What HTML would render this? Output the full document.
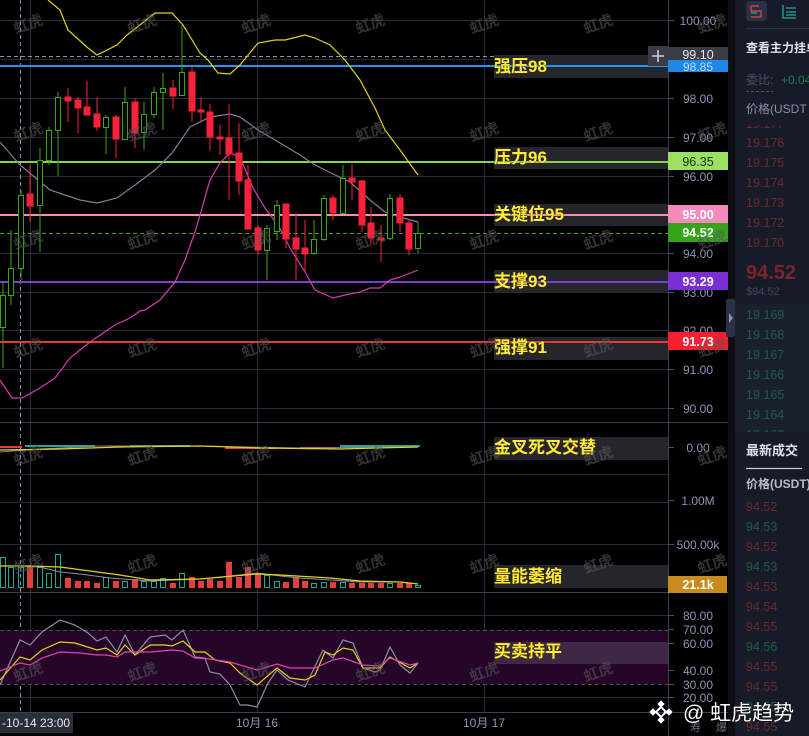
<!DOCTYPE html>
<html><head><meta charset="utf-8"><style>
html,body{margin:0;padding:0;background:#000;}
body{width:809px;height:736px;overflow:hidden;position:relative;font-family:"Liberation Sans","Noto Sans CJK SC",sans-serif;}
svg{position:absolute;left:0;top:0}
text{font-family:"Liberation Sans","Noto Sans CJK SC",sans-serif}
</style></head><body>
<svg width="809" height="736" viewBox="0 0 809 736" xmlns="http://www.w3.org/2000/svg">
<rect width="809" height="736" fill="#000"/>
<g stroke="#262a3a" stroke-width="1">
<line x1="0" y1="20.5" x2="668" y2="20.5"/><line x1="0" y1="59.5" x2="668" y2="59.5"/><line x1="0" y1="98.5" x2="668" y2="98.5"/><line x1="0" y1="137.5" x2="668" y2="137.5"/><line x1="0" y1="176.5" x2="668" y2="176.5"/><line x1="0" y1="253.5" x2="668" y2="253.5"/><line x1="0" y1="292.5" x2="668" y2="292.5"/><line x1="0" y1="330.5" x2="668" y2="330.5"/><line x1="0" y1="369.5" x2="668" y2="369.5"/><line x1="0" y1="408.5" x2="668" y2="408.5"/>
<line x1="0" y1="474.5" x2="668" y2="474.5"/><line x1="0" y1="502.5" x2="668" y2="502.5"/><line x1="0" y1="544.5" x2="668" y2="544.5"/><line x1="0" y1="615.5" x2="668" y2="615.5"/><line x1="0" y1="643.5" x2="668" y2="643.5"/><line x1="0" y1="670.5" x2="668" y2="670.5"/><line x1="0" y1="697.5" x2="668" y2="697.5"/>
<line x1="30.5" y1="0" x2="30.5" y2="712"/><line x1="257.5" y1="0" x2="257.5" y2="712"/><line x1="484.5" y1="0" x2="484.5" y2="712"/>
</g>
<g stroke="#3a3f55" stroke-width="1"><line x1="0" y1="422.5" x2="728" y2="422.5"/><line x1="0" y1="592.5" x2="728" y2="592.5"/><line x1="0" y1="712.5" x2="728" y2="712.5"/><line x1="668.5" y1="0" x2="668.5" y2="736"/></g>
<line x1="20.5" y1="0" x2="20.5" y2="712" stroke="#8a94b0" stroke-dasharray="4,3"/>
<rect x="0" y="630" width="668" height="54" fill="#250628"/>
<line x1="0" y1="630.5" x2="668" y2="630.5" stroke="#4a4f66" stroke-dasharray="4,3"/>
<line x1="0" y1="684.5" x2="668" y2="684.5" stroke="#4a4f66" stroke-dasharray="4,3"/>
<line x1="0" y1="56.5" x2="668" y2="56.5" stroke="#8a94b0" stroke-dasharray="4,3"/>
<line x1="0" y1="66" x2="728" y2="66" stroke="#2196f3" stroke-width="2"/>
<line x1="0" y1="162" x2="668" y2="162" stroke="#8bd24a" stroke-width="2"/>
<line x1="0" y1="215" x2="668" y2="215" stroke="#f48fb1" stroke-width="2"/>
<line x1="0" y1="233.5" x2="668" y2="233.5" stroke="#3ca51c" stroke-dasharray="4,3"/>
<line x1="0" y1="282" x2="668" y2="282" stroke="#7b3fcf" stroke-width="2"/>
<line x1="0" y1="342" x2="668" y2="342" stroke="#e53935" stroke-width="2"/>
<polyline fill="none" stroke="#e6d21a" stroke-width="1.2" points="48,0 60,10 68,30 88,48 97,55 117,45 127,35 155,13 172,13 183,25 200,53 208,60 218,73 230,74 240,65 258,43 275,40 285,40 305,35 315,38 330,45 345,60 360,80 375,108 385,130 400,150 418,175"/>
<polyline fill="none" stroke="#7c8196" stroke-width="1.2" points="0,142 20,165 50,190 80,200 97,203 117,198 135,185 155,170 172,153 190,127 210,117 230,114 240,117 258,130 275,140 300,155 315,165 335,175 350,182 370,200 385,212 400,217 418,222"/>
<polyline fill="none" stroke="#d63cb0" stroke-width="1.2" points="0,380 12,398 22,398 40,388 55,378 70,358 90,342 115,325 130,318 140,311 145,310 160,300 175,282 185,260 195,232 200,215 210,180 220,163 230,153 240,157 253,188 265,208 278,225 290,248 305,272 315,290 333,298 345,295 360,292 370,288 380,288 390,280 400,277 418,270"/>
<g>
<g stroke="#3ca51c" fill="#000">
<line x1="3" y1="282" x2="3" y2="368"/><rect x="0.5" y="295.5" width="5" height="32"/>
<line x1="11" y1="230" x2="11" y2="305"/><rect x="8.5" y="268.5" width="5" height="27"/>
<line x1="21" y1="190" x2="21" y2="280"/><rect x="18.5" y="195.5" width="5" height="73"/>
<line x1="40" y1="148" x2="40" y2="252"/><rect x="37.5" y="160.5" width="5" height="45"/>
<line x1="49" y1="127" x2="49" y2="165"/><rect x="46.5" y="130.5" width="5" height="30"/>
<line x1="58" y1="92" x2="58" y2="176"/><rect x="55.5" y="97.5" width="5" height="33"/>
<line x1="106" y1="115" x2="106" y2="154"/><rect x="103.5" y="117.5" width="5" height="10"/>
<line x1="125" y1="87" x2="125" y2="140"/><rect x="122.5" y="102.5" width="5" height="37"/>
<line x1="144" y1="102" x2="144" y2="150"/><rect x="141.5" y="114.5" width="5" height="18"/>
<line x1="154" y1="87" x2="154" y2="118"/><rect x="151.5" y="92.5" width="5" height="22"/>
<line x1="163" y1="73" x2="163" y2="130"/><rect x="160.5" y="88.5" width="5" height="4"/>
<line x1="182" y1="25" x2="182" y2="95"/><rect x="179.5" y="72.5" width="5" height="23"/>
<line x1="267" y1="225" x2="267" y2="280"/><rect x="264.5" y="228.5" width="5" height="22"/>
<line x1="277" y1="200" x2="277" y2="240"/><rect x="274.5" y="205.5" width="5" height="26"/>
<line x1="314" y1="220" x2="314" y2="255"/><rect x="311.5" y="239.5" width="5" height="14"/>
<line x1="324" y1="195" x2="324" y2="241"/><rect x="321.5" y="198.5" width="5" height="41"/>
<line x1="343" y1="165" x2="343" y2="214"/><rect x="340.5" y="178.5" width="5" height="35"/>
<line x1="390" y1="194" x2="390" y2="240"/><rect x="387.5" y="198.5" width="5" height="40"/>
<line x1="418" y1="222" x2="418" y2="253"/><rect x="415.5" y="233.5" width="5" height="15"/>
</g>
<g stroke="#f5223a" fill="#f5223a">
<line x1="30" y1="165" x2="30" y2="222"/><rect x="27" y="194" width="6" height="12"/>
<line x1="68" y1="88" x2="68" y2="122"/><rect x="65" y="97" width="6" height="4"/>
<line x1="78" y1="97" x2="78" y2="133"/><rect x="75" y="100" width="6" height="8"/>
<line x1="87" y1="81" x2="87" y2="115"/><rect x="84" y="107" width="6" height="8"/>
<line x1="97" y1="97" x2="97" y2="131"/><rect x="94" y="114" width="6" height="13"/>
<line x1="116" y1="115" x2="116" y2="158"/><rect x="113" y="117" width="6" height="22"/>
<line x1="135" y1="98" x2="135" y2="148"/><rect x="132" y="102" width="6" height="31"/>
<line x1="173" y1="80" x2="173" y2="109"/><rect x="170" y="88" width="6" height="8"/>
<line x1="192" y1="65" x2="192" y2="122"/><rect x="189" y="72" width="6" height="39"/>
<line x1="201" y1="97" x2="201" y2="121"/><rect x="198" y="110" width="6" height="2"/>
<line x1="210" y1="104" x2="210" y2="151"/><rect x="207" y="112" width="6" height="25"/>
<line x1="220" y1="125" x2="220" y2="155"/><rect x="217" y="137" width="6" height="2"/>
<line x1="229" y1="104" x2="229" y2="200"/><rect x="226" y="138" width="6" height="16"/>
<line x1="239" y1="123" x2="239" y2="195"/><rect x="236" y="153" width="6" height="28"/>
<line x1="248" y1="165" x2="248" y2="229"/><rect x="245" y="180" width="6" height="49"/>
<line x1="258" y1="225" x2="258" y2="255"/><rect x="255" y="228" width="6" height="22"/>
<line x1="286" y1="204" x2="286" y2="248"/><rect x="283" y="204" width="6" height="35"/>
<line x1="296" y1="213" x2="296" y2="280"/><rect x="293" y="238" width="6" height="11"/>
<line x1="305" y1="220" x2="305" y2="272"/><rect x="302" y="248" width="6" height="6"/>
<line x1="333" y1="195" x2="333" y2="220"/><rect x="330" y="198" width="6" height="15"/>
<line x1="352" y1="164" x2="352" y2="200"/><rect x="349" y="178" width="6" height="4"/>
<line x1="362" y1="180" x2="362" y2="232"/><rect x="359" y="181" width="6" height="44"/>
<line x1="371" y1="207" x2="371" y2="244"/><rect x="368" y="223" width="6" height="15"/>
<line x1="381" y1="225" x2="381" y2="262"/><rect x="378" y="238" width="6" height="2"/>
<line x1="400" y1="194" x2="400" y2="232"/><rect x="397" y="198" width="6" height="25"/>
<line x1="409" y1="219" x2="409" y2="255"/><rect x="406" y="223" width="6" height="26"/>
</g>
</g>
<g fill="#26a69a"><rect x="25" y="445" width="70" height="2"/><rect x="130" y="445" width="60" height="2"/><rect x="340" y="445" width="80" height="2"/></g>
<g fill="#e04040"><rect x="0" y="446" width="22" height="2"/><rect x="225" y="447" width="50" height="2"/><rect x="300" y="447" width="35" height="2"/></g>
<polyline fill="none" stroke="#7c8196" stroke-width="1" points="0,452 40,449 100,446 200,446 300,448 418,447"/>
<polyline fill="none" stroke="#e6d21a" stroke-width="1.2" points="0,450 60,449 120,447 200,446 260,448 340,449 418,447"/>
<g fill="#e04040">
<rect x="27" y="567" width="6" height="21"/><rect x="65" y="578" width="6" height="10"/><rect x="75" y="581" width="6" height="7"/><rect x="84" y="581" width="6" height="7"/><rect x="94" y="583" width="6" height="5"/><rect x="113" y="581" width="6" height="7"/><rect x="132" y="579" width="6" height="9"/><rect x="170" y="583" width="6" height="5"/><rect x="189" y="577" width="6" height="11"/><rect x="198" y="581" width="6" height="7"/><rect x="207" y="579" width="6" height="9"/><rect x="217" y="581" width="6" height="7"/><rect x="226" y="562" width="6" height="26"/><rect x="236" y="577" width="6" height="11"/><rect x="245" y="567" width="6" height="21"/><rect x="255" y="574" width="6" height="14"/><rect x="283" y="582" width="6" height="6"/><rect x="293" y="577" width="6" height="11"/><rect x="302" y="581" width="6" height="7"/><rect x="330" y="582" width="6" height="6"/><rect x="349" y="583" width="6" height="5"/><rect x="359" y="583" width="6" height="5"/><rect x="368" y="583" width="6" height="5"/><rect x="378" y="583" width="6" height="5"/><rect x="397" y="583" width="6" height="5"/><rect x="406" y="583" width="6" height="5"/>
</g>
<g fill="none" stroke="#26a69a">
<rect x="0.5" y="557.5" width="5" height="30"/><rect x="8.5" y="567.5" width="5" height="20"/><rect x="18.5" y="567.5" width="5" height="20"/><rect x="37.5" y="567.5" width="5" height="20"/><rect x="46.5" y="573.5" width="5" height="14"/><rect x="55.5" y="554.5" width="5" height="33"/><rect x="103.5" y="577.5" width="5" height="10"/><rect x="122.5" y="581.5" width="5" height="6"/><rect x="141.5" y="581.5" width="5" height="6"/><rect x="151.5" y="581.5" width="5" height="6"/><rect x="160.5" y="578.5" width="5" height="9"/><rect x="179.5" y="573.5" width="5" height="14"/><rect x="264.5" y="575.5" width="5" height="12"/><rect x="274.5" y="581.5" width="5" height="6"/><rect x="311.5" y="583.5" width="5" height="4"/><rect x="321.5" y="582.5" width="5" height="5"/><rect x="340.5" y="582.5" width="5" height="5"/><rect x="387.5" y="583.5" width="5" height="4"/><rect x="415.5" y="585.5" width="5" height="2"/>
</g>
<polyline fill="none" stroke="#8a8fa5" stroke-width="1" points="0,566 20,566 40,567 60,572 80,574 110,578 150,581 200,579 230,576 257,573 280,576 300,578 330,580 360,582 400,582 418,584"/>
<polyline fill="none" stroke="#e6d21a" stroke-width="1.2" points="0,566 30,566 60,567 90,571 120,575 150,580 200,579 257,574 280,575 330,578 360,581 400,582 418,584"/>
<polyline fill="none" stroke="#8a8fa5" stroke-width="1.2" points="0,685 20,640 30,645 42,632 60,620 75,625 88,633 97,641 106,637 117,652 125,635 135,655 150,637 165,635 172,640 183,630 195,657 205,658 210,672 220,674 230,685 240,705 248,705 257,707 268,683 277,670 288,680 305,687 323,650 333,658 343,640 353,643 363,668 375,672 380,670 390,647 400,665 410,673 418,663"/>
<polyline fill="none" stroke="#e6d21a" stroke-width="1.2" points="0,680 20,657 30,660 42,650 60,642 75,643 97,650 106,648 117,655 125,645 135,655 150,645 165,645 172,646 183,641 195,652 205,652 215,660 230,663 240,673 257,685 277,668 290,678 305,680 315,675 325,652 333,655 343,648 353,650 363,668 380,668 390,657 410,668 418,663"/>
<polyline fill="none" stroke="#e040b0" stroke-width="1.2" points="0,671 20,663 30,665 42,658 60,652 80,653 97,655 106,655 117,657 125,652 150,652 172,650 183,651 195,658 210,659 230,662 257,670 277,664 290,668 315,668 333,660 343,658 363,665 380,666 390,658 410,665 418,663"/>
<g fill="#25262c">
<rect x="494" y="55" width="174" height="23"/><rect x="494" y="147" width="174" height="22"/><rect x="494" y="204" width="174" height="22"/><rect x="494" y="270" width="174" height="23"/><rect x="494" y="337" width="174" height="23"/><rect x="494" y="437" width="174" height="23"/><rect x="494" y="565" width="174" height="23"/>
</g>
<rect x="494" y="642" width="174" height="22" fill="#3e2845"/>
<line x1="494" y1="66" x2="668" y2="66" stroke="#2196f3" stroke-width="2"/>
<line x1="494" y1="162" x2="668" y2="162" stroke="#8bd24a" stroke-width="2"/>
<line x1="494" y1="215" x2="668" y2="215" stroke="#f48fb1" stroke-width="2"/>
<line x1="494" y1="282" x2="668" y2="282" stroke="#7b3fcf" stroke-width="2"/>
<line x1="494" y1="342" x2="668" y2="342" stroke="#e53935" stroke-width="2"/>
<g font-size="17" font-weight="bold" fill="#ffeb3b" stroke="#3a2a00" stroke-width="0.6" paint-order="stroke">
<text x="494" y="72">强压98</text><text x="494" y="163">压力96</text><text x="494" y="220">关键位95</text><text x="494" y="287">支撑93</text><text x="494" y="353">强撑91</text><text x="494" y="453">金叉死叉交替</text><text x="494" y="582">量能萎缩</text><text x="494" y="657">买卖持平</text>
</g>
<rect x="648" y="46" width="20" height="20" fill="#3a3d47"/>
<path d="M658 50v12M652 56h12" stroke="#d0d4dc" stroke-width="1.5"/>
<g stroke="#4a5068"><line x1="668" y1="20.5" x2="674" y2="20.5"/><line x1="668" y1="98.5" x2="674" y2="98.5"/><line x1="668" y1="137.5" x2="674" y2="137.5"/><line x1="668" y1="176.5" x2="674" y2="176.5"/><line x1="668" y1="253.5" x2="674" y2="253.5"/><line x1="668" y1="292.5" x2="674" y2="292.5"/><line x1="668" y1="369.5" x2="674" y2="369.5"/><line x1="668" y1="408.5" x2="674" y2="408.5"/><line x1="668" y1="447.5" x2="674" y2="447.5"/><line x1="668" y1="500.5" x2="674" y2="500.5"/><line x1="668" y1="544.5" x2="674" y2="544.5"/><line x1="668" y1="615.5" x2="674" y2="615.5"/><line x1="668" y1="629.5" x2="674" y2="629.5"/><line x1="668" y1="643.5" x2="674" y2="643.5"/><line x1="668" y1="670.5" x2="674" y2="670.5"/><line x1="668" y1="684.5" x2="674" y2="684.5"/><line x1="668" y1="697.5" x2="674" y2="697.5"/></g>
<g font-size="12" fill="#8a96b8" text-anchor="middle">
<text x="698" y="25">100.00</text><text x="698" y="103">98.00</text><text x="698" y="142">97.00</text><text x="698" y="181">96.00</text><text x="698" y="258">94.00</text><text x="698" y="297">93.00</text><text x="698" y="335">92.00</text><text x="698" y="374">91.00</text><text x="698" y="413">90.00</text><text x="698" y="452">0.00</text><text x="698" y="505">1.00M</text><text x="698" y="549">500.00k</text><text x="698" y="620">80.00</text><text x="698" y="634">70.00</text><text x="698" y="648">60.00</text><text x="698" y="675">40.00</text><text x="698" y="689">30.00</text><text x="698" y="702">20.00</text>
</g>
<rect x="668" y="58" width="60" height="14" fill="#1e88e5"/>
<text x="698" y="71" font-size="12" fill="#c9d6f0" text-anchor="middle">98.85</text>
<rect x="668" y="47" width="60" height="13" fill="#3a3d47"/>
<text x="698" y="59" font-size="12.5" fill="#e6e8ee" text-anchor="middle">99.10</text>
<rect x="668" y="152" width="60" height="18" fill="#9be060"/><text x="698" y="166" font-size="12.5" fill="#1a2a10" text-anchor="middle">96.35</text>
<rect x="668" y="205" width="60" height="18" fill="#f58bbd"/><text x="698" y="219" font-size="12.5" font-weight="bold" fill="#fff" text-anchor="middle">95.00</text>
<rect x="668" y="223" width="60" height="19" fill="#34a51a"/><text x="698" y="237" font-size="12.5" font-weight="bold" fill="#fff" text-anchor="middle">94.52</text>
<rect x="668" y="272" width="60" height="18" fill="#7a2fd2"/><text x="698" y="286" font-size="12.5" font-weight="bold" fill="#fff" text-anchor="middle">93.29</text>
<rect x="668" y="332" width="60" height="18" fill="#f51f2f"/><text x="698" y="346" font-size="12.5" font-weight="bold" fill="#fff" text-anchor="middle">91.73</text>
<rect x="668" y="576" width="59" height="17" fill="#c98a1f"/><text x="698" y="589" font-size="12.5" font-weight="bold" fill="#fff" text-anchor="middle">21.1k</text>
<rect x="0" y="713" width="73" height="20" fill="#2a2e39"/>
<text x="2" y="727" font-size="12" fill="#e6e8ee">-10-14 23:00</text>
<text x="257" y="727" font-size="12" fill="#8a96b8" text-anchor="middle">10月 16</text>
<text x="484" y="727" font-size="12" fill="#8a96b8" text-anchor="middle">10月 17</text>
<text x="690" y="731" font-size="11" fill="#6a7088">寿</text><text x="716" y="731" font-size="11" fill="#6a7088">爆</text>
<g font-size="15" fill="#555" fill-opacity="0.6" font-weight="bold">
<text transform="translate(16,34) rotate(-20)">虹虎</text><text transform="translate(130,34) rotate(-20)">虹虎</text><text transform="translate(244,34) rotate(-20)">虹虎</text><text transform="translate(358,34) rotate(-20)">虹虎</text><text transform="translate(472,34) rotate(-20)">虹虎</text><text transform="translate(586,34) rotate(-20)">虹虎</text><text transform="translate(700,34) rotate(-20)">虹虎</text>
<text transform="translate(16,142) rotate(-20)">虹虎</text><text transform="translate(130,142) rotate(-20)">虹虎</text><text transform="translate(244,142) rotate(-20)">虹虎</text><text transform="translate(358,142) rotate(-20)">虹虎</text><text transform="translate(472,142) rotate(-20)">虹虎</text><text transform="translate(586,142) rotate(-20)">虹虎</text><text transform="translate(700,142) rotate(-20)">虹虎</text>
<text transform="translate(16,250) rotate(-20)">虹虎</text><text transform="translate(130,250) rotate(-20)">虹虎</text><text transform="translate(244,250) rotate(-20)">虹虎</text><text transform="translate(358,250) rotate(-20)">虹虎</text><text transform="translate(472,250) rotate(-20)">虹虎</text><text transform="translate(586,250) rotate(-20)">虹虎</text><text transform="translate(700,250) rotate(-20)">虹虎</text>
<text transform="translate(16,358) rotate(-20)">虹虎</text><text transform="translate(130,358) rotate(-20)">虹虎</text><text transform="translate(244,358) rotate(-20)">虹虎</text><text transform="translate(358,358) rotate(-20)">虹虎</text><text transform="translate(472,358) rotate(-20)">虹虎</text><text transform="translate(586,358) rotate(-20)">虹虎</text><text transform="translate(700,358) rotate(-20)">虹虎</text>
<text transform="translate(16,466) rotate(-20)">虹虎</text><text transform="translate(130,466) rotate(-20)">虹虎</text><text transform="translate(244,466) rotate(-20)">虹虎</text><text transform="translate(358,466) rotate(-20)">虹虎</text><text transform="translate(472,466) rotate(-20)">虹虎</text><text transform="translate(586,466) rotate(-20)">虹虎</text><text transform="translate(700,466) rotate(-20)">虹虎</text>
<text transform="translate(16,574) rotate(-20)">虹虎</text><text transform="translate(130,574) rotate(-20)">虹虎</text><text transform="translate(244,574) rotate(-20)">虹虎</text><text transform="translate(358,574) rotate(-20)">虹虎</text><text transform="translate(472,574) rotate(-20)">虹虎</text><text transform="translate(586,574) rotate(-20)">虹虎</text><text transform="translate(700,574) rotate(-20)">虹虎</text>
<text transform="translate(16,682) rotate(-20)">虹虎</text><text transform="translate(130,682) rotate(-20)">虹虎</text><text transform="translate(244,682) rotate(-20)">虹虎</text><text transform="translate(358,682) rotate(-20)">虹虎</text><text transform="translate(472,682) rotate(-20)">虹虎</text><text transform="translate(586,682) rotate(-20)">虹虎</text>
</g>
<rect x="728" y="0" width="7" height="736" fill="#0c0e14"/>
<rect x="735" y="0" width="74" height="736" fill="#171b28"/>
<rect x="726" y="299" width="9" height="38" rx="2" fill="#2a3145"/>
<path d="M729 313l4 5-4 5z" fill="#8a94b0"/>
<rect x="746" y="1" width="21" height="20" rx="3" fill="#2a3145"/>
<path d="M751 6h8M751 6v5h10v6h-10" stroke="#e04848" stroke-width="1.3" fill="none"/>
<path d="M751 13h6" stroke="#26a69a" stroke-width="1.3"/>
<path d="M783 5v13h13M786 8h10M786 12h10M786 15h10" stroke="#26a69a" stroke-width="1.3" fill="none"/>
<line x1="746" y1="28.5" x2="809" y2="28.5" stroke="#2a3145"/>
<text x="746" y="52" font-size="12" font-weight="bold" fill="#dfe3ec">查看主力挂单</text>
<text x="746" y="84" font-size="12" fill="#4a5068">委比:</text><text x="781" y="84" font-size="12" fill="#1f7a58">+0.04</text>
<line x1="746" y1="91.5" x2="773" y2="91.5" stroke="#4a5068" stroke-dasharray="3,2"/>
<text x="746" y="113" font-size="12" fill="#8a90a6">价格(USDT</text>
<g font-size="12.5" fill="#6b2a30">
<text x="746" y="128">19.177</text><text x="746" y="147">19.176</text><text x="746" y="167">19.175</text><text x="746" y="187">19.174</text><text x="746" y="207">19.173</text><text x="746" y="227">19.172</text><text x="746" y="247">19.170</text>
</g>
<rect x="735" y="118" width="74" height="7" fill="#171b28"/>
<text x="746" y="279" font-size="20" font-weight="bold" fill="#7a232a">94.52</text>
<text x="746" y="295" font-size="11" fill="#3f4560">$94.52</text>
<rect x="735" y="304" width="74" height="132" fill="#1a1f2d"/>
<g font-size="12.5" fill="#1d5e45">
<text x="746" y="319">19.169</text><text x="746" y="339">19.168</text><text x="746" y="359">19.167</text><text x="746" y="379">19.166</text><text x="746" y="399">19.165</text><text x="746" y="419">19.164</text><text x="746" y="439">19.163</text>
</g>
<rect x="735" y="432" width="74" height="10" fill="#171b28"/>
<text x="746" y="455" font-size="13" font-weight="bold" fill="#dfe3ec">最新成交</text>
<line x1="746" y1="468.5" x2="802" y2="468.5" stroke="#c8ccd8" stroke-width="1.2"/>
<text x="746" y="488" font-size="12" font-weight="bold" fill="#b8bccc">价格(USDT)</text>
<g font-size="12.5">
<text x="746" y="511" fill="#6b2a30">94.52</text><text x="746" y="531" fill="#1d5e45">94.53</text><text x="746" y="551" fill="#6b2a30">94.52</text><text x="746" y="571" fill="#1d5e45">94.53</text><text x="746" y="591" fill="#6b2a30">94.53</text><text x="746" y="611" fill="#6b2a30">94.54</text><text x="746" y="631" fill="#6b2a30">94.55</text><text x="746" y="651" fill="#1d5e45">94.56</text><text x="746" y="671" fill="#6b2a30">94.55</text><text x="746" y="691" fill="#6b2a30">94.55</text><text x="746" y="711" fill="#1d5e45">94.55</text><text x="746" y="731" fill="#6b2a30">94.55</text>
</g>
<g fill="#fff" stroke="#000" stroke-width="0.5">
<path d="M661 700l4 4-4 4-4-4z M661 716l4 4-4 4-4-4z M653 708l4 4-4 4-4-4z M669 708l4 4-4 4-4-4z"/>
</g>
<path d="M661 707l5 5-5 5-5-5z" fill="none" stroke="#fff" stroke-width="2"/>
<text x="683" y="720" font-size="21" fill="#fff" stroke="#000" stroke-width="0.6" paint-order="stroke">@ 虹虎趋势</text>
</svg>
</body></html>
